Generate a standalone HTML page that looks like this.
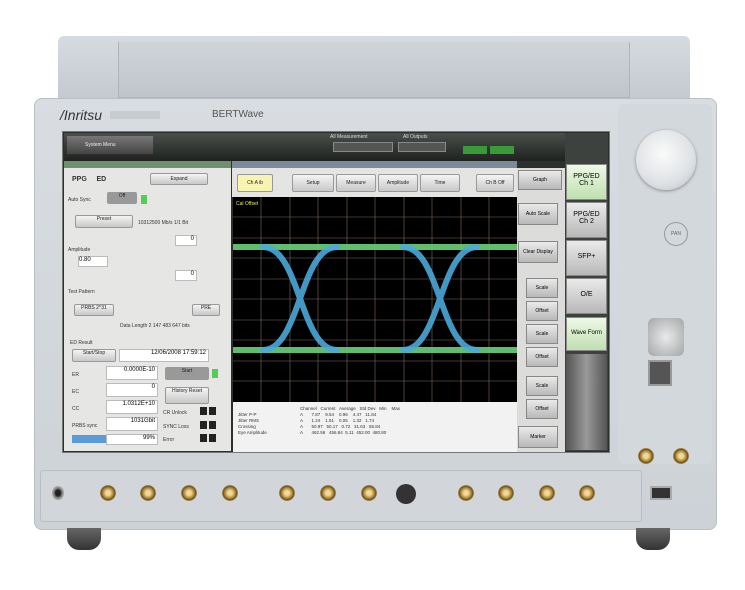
<!DOCTYPE html>
<html><head><style>
body{margin:0;width:745px;height:590px;background:#fff;position:relative;overflow:hidden;font-family:"Liberation Sans",sans-serif}
div{position:absolute;box-sizing:border-box}
.t{font-size:5px;color:#333;white-space:nowrap}
.b{background:linear-gradient(#f4f4f4,#c8c8c8);border:1px solid #999;border-radius:2px;font-size:5px;text-align:center;color:#222}
.sk{background:linear-gradient(#eaeaea,#b8b8b8);border:1px solid #888;font-size:5px;text-align:center}
.conn{width:16px;height:16px;border-radius:50%;background:radial-gradient(#f0d89a 20%,#b08a3a 45%,#6c5420 60%,#c9b27a 75%);}
.wf{background:#fff;border:1px solid #bbb;font-size:6px;text-align:right;padding-right:2px}
</style></head><body>
<!-- top lid -->
<div style="left:58px;top:36px;width:632px;height:66px;background:linear-gradient(#d6dbe0,#c3c9cf);border-radius:6px 6px 0 0"></div>
<div style="left:118px;top:42px;width:512px;height:56px;background:linear-gradient(#cfd4d9,#bfc5cb);border:1px solid #aeb4ba;border-top:none"></div>
<!-- body -->
<div style="left:34px;top:98px;width:683px;height:432px;background:linear-gradient(#d9dde1,#cdd2d7);border-radius:8px;border:1px solid #b9bfc5"></div>
<div style="left:618px;top:104px;width:94px;height:360px;background:#d3d8dc;border-radius:6px"></div>
<div style="left:636px;top:130px;width:60px;height:60px;border-radius:50%;background:radial-gradient(circle at 45% 40%,#fafafa,#dfe2e5 60%,#b5bbc1);box-shadow:0 1px 3px #888"></div>
<div style="left:664px;top:222px;width:24px;height:24px;border-radius:50%;border:1px solid #999;font-size:5px;text-align:center;line-height:22px;color:#666">PAN</div>
<div style="left:648px;top:360px;width:24px;height:26px;background:#555;border:2px solid #999"></div>
<div style="left:648px;top:318px;width:36px;height:38px;background:radial-gradient(#eee,#999);border-radius:6px;opacity:.8"></div>
<div class="conn" style="left:638px;top:448px"></div><div class="conn" style="left:673px;top:448px"></div>
<div style="left:650px;top:486px;width:22px;height:14px;background:#333;border:2px solid #aaa"></div>
<!-- logo -->
<div style="left:60px;top:107px;font-size:14px;font-style:italic;color:#333">/Inritsu</div>
<div style="left:110px;top:111px;width:50px;height:8px;background:#c7ccd1"></div>
<div style="left:212px;top:109px;font-size:10px;color:#555">BERTWave</div>
<!-- screen -->
<div style="left:62px;top:131px;width:548px;height:322px;background:#2c302c;border:1px solid #777"></div>
<div style="left:64px;top:133px;width:544px;height:28px;background:linear-gradient(#4a4f4a,#1f221f)"></div>
<div style="left:67px;top:136px;width:86px;height:18px;background:linear-gradient(#777,#444);color:#eee;font-size:5px;line-height:18px;padding-left:18px">System Menu</div>
<div style="left:330px;top:134px;color:#ddd" class="t">All Measurement</div>
<div style="left:403px;top:134px;color:#ddd" class="t">All Outputs</div>
<div style="left:333px;top:142px;width:60px;height:10px;background:#555;border:1px solid #888"></div>
<div style="left:398px;top:142px;width:48px;height:10px;background:#555;border:1px solid #888"></div>
<div style="left:463px;top:146px;width:24px;height:8px;background:#3a9a3a"></div>
<div style="left:490px;top:146px;width:24px;height:8px;background:#3a9a3a"></div>
<!-- left panel -->
<div style="left:64px;top:161px;width:167px;height:290px;background:#e6e7e5"></div>
<div style="left:64px;top:161px;width:167px;height:7px;background:#6f8f6f"></div>
<div class="t" style="left:72px;top:176px;font-size:7px;font-weight:bold">PPG &nbsp;&nbsp;&nbsp; ED</div>
<div class="b" style="left:150px;top:173px;width:58px;height:12px;line-height:11px">Expand</div>
<div class="t" style="left:68px;top:197px">Auto Sync</div>
<div class="b" style="left:107px;top:192px;width:30px;height:12px;background:#999">Off</div>
<div style="left:141px;top:195px;width:6px;height:9px;background:#5c5"></div>
<div class="b" style="left:75px;top:215px;width:58px;height:13px">Preset</div>
<div class="t" style="left:138px;top:220px">10312500 Mb/s 1/1 Bit</div>
<div class="wf" style="left:175px;top:235px;width:22px;height:11px">0</div>
<div class="t" style="left:68px;top:247px">Amplitude</div>
<div class="wf" style="left:78px;top:256px;width:30px;height:11px;text-align:left">0.80</div>
<div class="wf" style="left:175px;top:270px;width:22px;height:11px">0</div>
<div class="t" style="left:68px;top:289px">Test Pattern</div>
<div class="b" style="left:74px;top:304px;width:40px;height:12px">PRBS 2^31</div>
<div class="b" style="left:192px;top:304px;width:28px;height:12px">PRE</div>
<div class="t" style="left:120px;top:323px">Data Length 2 147 483 647 bits</div>
<div class="t" style="left:70px;top:340px">ED Result</div>
<div class="b" style="left:72px;top:349px;width:44px;height:13px">Start/Stop</div>
<div class="wf" style="left:119px;top:349px;width:90px;height:13px">12/06/2008 17:59:12</div>
<div class="t" style="left:72px;top:372px">ER</div><div class="wf" style="left:106px;top:366px;width:52px;height:14px">0.0000E-10</div>
<div class="b" style="left:165px;top:367px;width:44px;height:13px;background:#999">Start</div>
<div style="left:212px;top:369px;width:6px;height:9px;background:#5c5"></div>
<div class="t" style="left:72px;top:389px">EC</div><div class="wf" style="left:106px;top:383px;width:52px;height:14px">0</div>
<div class="b" style="left:165px;top:387px;width:44px;height:17px">History Reset</div>
<div class="t" style="left:72px;top:406px">CC</div><div class="wf" style="left:106px;top:400px;width:52px;height:14px">1.0312E+10</div>
<div class="t" style="left:72px;top:423px">PRBS sync</div><div class="wf" style="left:106px;top:417px;width:52px;height:14px">1031Gbit</div>
<div style="left:72px;top:435px;width:34px;height:8px;background:#5a9ad6"></div>
<div class="wf" style="left:106px;top:434px;width:52px;height:11px">99%</div>
<div class="t" style="left:163px;top:410px">CR Unlock</div><div class="t" style="left:163px;top:424px">SYNC Loss</div><div class="t" style="left:163px;top:437px">Error</div>
<div style="left:200px;top:407px;width:7px;height:8px;background:#222"></div><div style="left:209px;top:407px;width:7px;height:8px;background:#222"></div>
<div style="left:200px;top:421px;width:7px;height:8px;background:#222"></div><div style="left:209px;top:421px;width:7px;height:8px;background:#222"></div>
<div style="left:200px;top:434px;width:7px;height:8px;background:#222"></div><div style="left:209px;top:434px;width:7px;height:8px;background:#222"></div>
<!-- graph area -->
<div style="left:232px;top:161px;width:285px;height:7px;background:#7a8a9a"></div>
<div style="left:232px;top:168px;width:285px;height:29px;background:#e4e5e3"></div>
<div class="b" style="left:237px;top:174px;width:36px;height:18px;background:#f6f4b0;line-height:17px">Ch A ib</div>
<div class="b" style="left:292px;top:174px;width:42px;height:18px;line-height:17px">Setup</div>
<div class="b" style="left:336px;top:174px;width:40px;height:18px;line-height:17px">Measure</div>
<div class="b" style="left:378px;top:174px;width:40px;height:18px;line-height:17px">Amplitude</div>
<div class="b" style="left:420px;top:174px;width:40px;height:18px;line-height:17px">Time</div>
<div class="b" style="left:476px;top:174px;width:38px;height:18px;line-height:17px">Ch B Off</div>
<svg style="position:absolute;left:233px;top:197px" width="285" height="205">
<rect width="285" height="205" fill="#000"/>
<g stroke="#b89a8a" stroke-width="0.6" opacity=".7">
<path d="M28 0V205M57 0V205M85 0V205M114 0V205M142 0V205M171 0V205M199 0V205M228 0V205M256 0V205"/>
<path d="M0 20H285M0 41H285M0 61H285M0 82H285M0 102H285M0 123H285M0 143H285M0 164H285M0 184H285"/>
</g>
<g fill="none" stroke-linecap="round">
<path d="M0 50H285M0 153H285" stroke="#6ad27a" stroke-width="6" opacity=".9"/>
<path d="M30 50C67 50 67 153 104 153M30 153C67 153 67 50 104 50M170 50C207 50 207 153 244 153M170 153C207 153 207 50 244 50" stroke="#4aa8d8" stroke-width="6" opacity=".9"/>
</g>
<text x="3" y="8" fill="#ee4" font-size="5" font-family="Liberation Sans">Cal Offset</text>
</svg>
<div style="left:233px;top:402px;width:284px;height:50px;background:#f2f2f2"></div>
<div class="t" style="left:238px;top:412px;line-height:6px;font-size:4.5px">Jitter P-P<br>Jitter RMS<br>Crossing<br>Eye Amplitude</div>
<div class="t" style="left:300px;top:406px;line-height:6px;font-size:4.5px">Channel &nbsp; Current &nbsp; Average &nbsp; Std Dev &nbsp; Min &nbsp;&nbsp; Max<br>A &nbsp;&nbsp;&nbsp;&nbsp;&nbsp; 7.87 &nbsp;&nbsp; 9.54 &nbsp;&nbsp; 0.96 &nbsp;&nbsp; 4.47 &nbsp; 11.84<br>A &nbsp;&nbsp;&nbsp;&nbsp;&nbsp; 1.24 &nbsp;&nbsp; 1.51 &nbsp;&nbsp; 0.05 &nbsp;&nbsp; 1.32 &nbsp; 1.74<br>A &nbsp;&nbsp;&nbsp;&nbsp;&nbsp; 50.97 &nbsp; 50.17 &nbsp; 0.72 &nbsp; 31.63 &nbsp; 55.84<br>A &nbsp;&nbsp;&nbsp;&nbsp;&nbsp; 462.56 &nbsp; 456.84 &nbsp;5.11 &nbsp;452.00 &nbsp;480.80</div>
<!-- right buttons -->
<div style="left:517px;top:168px;width:48px;height:284px;background:#dcdddb"></div>
<div class="sk" style="left:518px;top:170px;width:44px;height:20px;line-height:19px">Graph</div>
<div class="sk" style="left:518px;top:203px;width:40px;height:22px;line-height:21px">Auto Scale</div>
<div class="sk" style="left:518px;top:241px;width:40px;height:22px;line-height:21px">Clear Display</div>
<div class="sk" style="left:526px;top:278px;width:32px;height:20px;line-height:19px">Scale</div>
<div class="sk" style="left:526px;top:301px;width:32px;height:20px;line-height:19px">Offset</div>
<div class="sk" style="left:526px;top:324px;width:32px;height:20px;line-height:19px">Scale</div>
<div class="sk" style="left:526px;top:347px;width:32px;height:20px;line-height:19px">Offset</div>
<div class="sk" style="left:526px;top:376px;width:32px;height:20px;line-height:19px">Scale</div>
<div class="sk" style="left:526px;top:399px;width:32px;height:20px;line-height:19px">Offset</div>
<div class="sk" style="left:518px;top:426px;width:40px;height:22px;line-height:21px">Marker</div>
<!-- softkeys -->
<div style="left:565px;top:133px;width:43px;height:318px;background:#3e423e"></div>
<div class="sk" style="left:566px;top:164px;width:41px;height:36px;background:linear-gradient(#eef8e6,#bfe0b0);font-size:7px;padding-top:8px">PPG/ED<br>Ch 1</div>
<div class="sk" style="left:566px;top:202px;width:41px;height:36px;font-size:7px;padding-top:8px">PPG/ED<br>Ch 2</div>
<div class="sk" style="left:566px;top:240px;width:41px;height:36px;font-size:7px;padding-top:12px">SFP+</div>
<div class="sk" style="left:566px;top:278px;width:41px;height:36px;font-size:7px;padding-top:12px">O/E</div>
<div class="sk" style="left:566px;top:317px;width:41px;height:34px;background:linear-gradient(#eef8e6,#bfe0b0);font-size:6px;padding-top:12px">Wave Form</div>
<div style="left:566px;top:354px;width:41px;height:96px;background:linear-gradient(90deg,#555,#999,#555)"></div>
<!-- bottom connector strip -->
<div style="left:40px;top:470px;width:602px;height:52px;border:1px solid #b8bdc2;border-radius:3px;background:#d2d6da"></div>
<div style="left:52px;top:486px;width:12px;height:14px;border-radius:50%;background:radial-gradient(#222 30%,#888 50%,#ddd)"></div>
<div class="conn" style="left:100px;top:485px"></div>
<div class="conn" style="left:140px;top:485px"></div>
<div class="conn" style="left:181px;top:485px"></div>
<div class="conn" style="left:222px;top:485px"></div>
<div class="conn" style="left:279px;top:485px"></div>
<div class="conn" style="left:320px;top:485px"></div>
<div class="conn" style="left:361px;top:485px"></div>
<div style="left:396px;top:484px;width:20px;height:20px;border-radius:50%;background:#333"></div>
<div class="conn" style="left:458px;top:485px"></div>
<div class="conn" style="left:498px;top:485px"></div>
<div class="conn" style="left:539px;top:485px"></div>
<div class="conn" style="left:579px;top:485px"></div>
<!-- feet -->
<div style="left:67px;top:528px;width:34px;height:22px;background:linear-gradient(#666,#333);border-radius:0 0 12px 12px"></div>
<div style="left:636px;top:528px;width:34px;height:22px;background:linear-gradient(#666,#333);border-radius:0 0 12px 12px"></div>
</body></html>
